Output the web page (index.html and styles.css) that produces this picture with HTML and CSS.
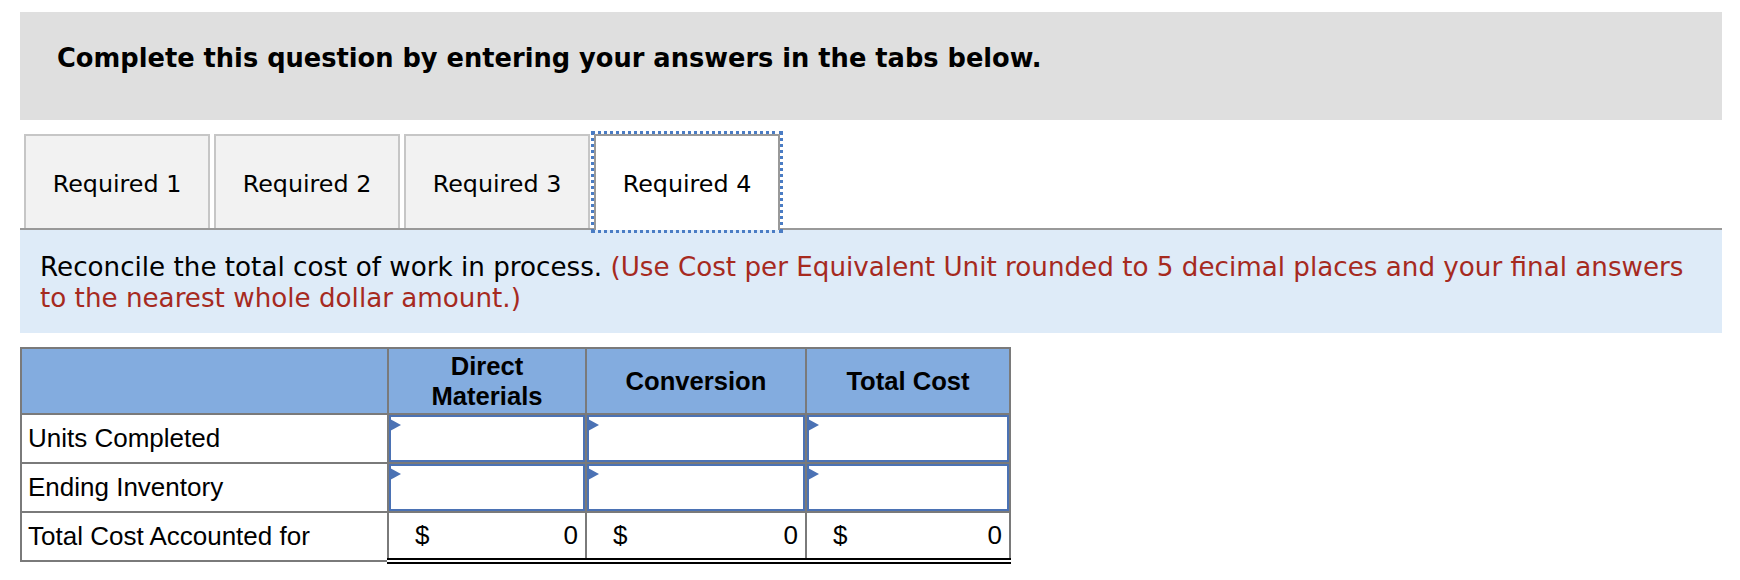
FILE: index.html
```html
<!DOCTYPE html>
<html>
<head>
<meta charset="utf-8">
<link rel="stylesheet" href="styles.css">
</head>
<body>
<div class="page">
  <div class="q-header">
    <h1 class="q-title">Complete this question by entering your answers in the tabs below.</h1>
  </div>
  <div class="tabs">
    <div class="tab">Required 1</div>
    <div class="tab">Required 2</div>
    <div class="tab">Required 3</div>
    <div class="tab active">Required 4</div>
  </div>
  <div class="instructions">
    <p>Reconcile the total cost of work in process. <span class="hint">(Use Cost per Equivalent Unit rounded to 5 decimal places and your final answers to the nearest whole dollar amount.)</span></p>
  </div>
  <table class="grid">
    <colgroup>
      <col class="c-label">
      <col class="c-dm">
      <col class="c-conv">
      <col class="c-total">
    </colgroup>
    <thead>
      <tr>
        <th></th>
        <th>Direct<br>Materials</th>
        <th>Conversion</th>
        <th>Total Cost</th>
      </tr>
    </thead>
    <tbody>
      <tr class="input-row">
        <td class="label">Units Completed</td>
        <td class="inp"><div class="box"></div></td>
        <td class="inp"><div class="box"></div></td>
        <td class="inp"><div class="box"></div></td>
      </tr>
      <tr class="input-row">
        <td class="label">Ending Inventory</td>
        <td class="inp"><div class="box"></div></td>
        <td class="inp"><div class="box"></div></td>
        <td class="inp"><div class="box"></div></td>
      </tr>
      <tr class="total-row">
        <td class="label">Total Cost Accounted for</td>
        <td class="val"><span class="cur">$</span><span class="num">0</span></td>
        <td class="val"><span class="cur">$</span><span class="num">0</span></td>
        <td class="val"><span class="cur">$</span><span class="num">0</span></td>
      </tr>
    </tbody>
  </table>
</div>
</body>
</html>
```
FILE: styles.css
```css
html, body {
  margin: 0;
  padding: 0;
  background: #ffffff;
}
.page {
  padding: 12px 18px 0 20px;
  font-family: "DejaVu Sans", Verdana, sans-serif;
  color: #000;
}
.q-header {
  background: #dfdfdf;
  height: 108px;
  padding: 31px 0 0 37px;
  box-sizing: border-box;
}
.q-title {
  margin: 0;
  font-size: 25.7px;
  font-weight: bold;
  line-height: 30px;
}
.tabs {
  display: flex;
  gap: 4px;
  margin-top: 14px;
  padding-left: 4px;
  height: 96px;
  border-bottom: 2px solid #999999;
  box-sizing: border-box;
}
.tab {
  width: 186px;
  height: 94px;
  box-sizing: border-box;
  background: #f2f2f2;
  border: 2px solid #c6c6c6;
  border-bottom: none;
  display: flex;
  align-items: center;
  justify-content: center;
  font-size: 23.8px;
  padding-top: 4px;
}
.tab.active {
  background: #ffffff;
  border-color: #999999;
  height: 96px;
  margin-bottom: -2px;
  padding-top: 2px;
  outline: 3px dotted #4a7cc4;
  outline-offset: 0px;
  position: relative;
  z-index: 1;
}
.instructions {
  background: #deebf8;
  height: 103px;
  padding: 0 30px 0 20px;
  box-sizing: border-box;
}
.instructions p {
  margin: 0;
  font-size: 26.2px;
  line-height: 31px;
  padding-top: 22px;
}
.hint {
  color: #a62a1f;
}
.grid {
  margin-top: 14px;
  border-collapse: collapse;
  font-family: "Liberation Sans", Arial, sans-serif;
  font-size: 26px;
  table-layout: fixed;
  width: 989px;
}
.c-label { width: 367px; }
.c-dm { width: 198px; }
.c-conv { width: 220px; }
.c-total { width: 204px; }
.grid th, .grid td {
  border: 2px solid #7a7a7a;
  padding: 0;
}
.grid th {
  background: #83acdf;
  height: 64px;
  font-weight: bold;
  font-size: 25.6px;
  line-height: 30px;
  text-align: center;
  vertical-align: middle;
}
.input-row td {
  height: 47px;
}
.label {
  padding-left: 6px !important;
  vertical-align: middle;
}
.inp {
  position: relative;
}
.box {
  position: absolute;
  inset: 0;
  border: 2px solid #4b72b4;
  background: #fff;
}
.box::before {
  content: "";
  position: absolute;
  left: -1px;
  top: 2px;
  border-top: 6px solid transparent;
  border-bottom: 6px solid transparent;
  border-left: 11px solid #4b72b4;
}
.total-row td {
  height: 45px;
}
.total-row td.val {
  border-top: 2px solid #000;
  border-bottom: 6px double #000;
  padding: 0 7px 0 26px;
}
.cur {
  float: left;
}
.num {
  float: right;
}
```
